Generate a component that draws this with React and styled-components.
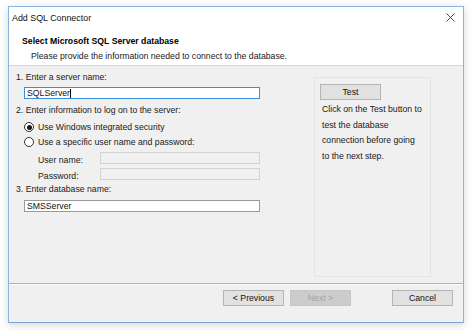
import React from 'react'
import styled, { createGlobalStyle } from 'styled-components'

const GlobalStyle = createGlobalStyle`
  html, body {
    margin: 0;
    padding: 0;
    background: #ffffff;
  }
  body {
    font-family: "Liberation Sans", Arial, sans-serif;
    font-size: 8.7px;
    color: #1a1a1a;
  }
`

const Page = styled.div`
  width: 474px;
  height: 335px;
  padding: 6px 0 0 8px;
  box-sizing: border-box;
`

const Window = styled.div`
  width: 456px;
  height: 317px;
  box-sizing: border-box;
  border: 1px solid #8ab4dd;
  border-bottom-color: #7aa5d2;
  box-shadow: 0 2px 8px rgba(0, 0, 0, 0.16);
  background: #f0f0f0;
  display: flex;
  flex-direction: column;
`

const Header = styled.div`
  background: #ffffff;
  height: 58px;
  border-bottom: 1px solid #d6d6d6;
  display: flex;
  flex-direction: column;
  flex-shrink: 0;
`

const TitleBar = styled.div`
  height: 21px;
  display: flex;
  align-items: center;
  justify-content: space-between;
  padding: 0 8px 0 3px;
  font-size: 8.9px;
  color: #111;
`

const CloseIcon = () => (
  <svg width="9" height="9" viewBox="0 0 9 9">
    <path d="M0.5 0.5 L8.5 8.5 M8.5 0.5 L0.5 8.5" stroke="#333" strokeWidth="0.9" fill="none" />
  </svg>
)

const Heading = styled.div`
  margin-top: 7px;
  padding-left: 13px;
  font-weight: bold;
  line-height: 12px;
  color: #000;
`

const Subtitle = styled.div`
  margin-top: 3px;
  padding-left: 22px;
  line-height: 12px;
  color: #222;
`

const Body = styled.div`
  flex: 1;
  display: flex;
  justify-content: space-between;
  padding: 5px 32px 0 7px;
`

const Form = styled.div`
  width: 251px;
  display: flex;
  flex-direction: column;
`

const Label = styled.div`
  line-height: 12px;
  margin-top: ${p => p.$gap || 0}px;
  color: #1a1a1a;
`

const Field = styled.div`
  box-sizing: border-box;
  height: 12px;
  width: ${p => p.$width}px;
  margin-left: ${p => p.$indent || 0}px;
  margin-top: ${p => p.$gap || 0}px;
  border: 1px solid ${p => (p.$focused ? '#3a8ddb' : p.$disabled ? '#d2d2d2' : '#9a9a9a')};
  background: ${p => (p.$disabled ? '#f0f0f0' : '#ffffff')};
  padding-left: 2px;
  line-height: 10px;
  color: #111;
  display: flex;
  align-items: center;
`

const Caret = styled.span`
  display: inline-block;
  width: 1px;
  height: 9px;
  background: #000;
  margin-left: 0.5px;
`

const RadioRow = styled.div`
  display: flex;
  align-items: center;
  gap: 4px;
  margin-left: 8px;
  margin-top: ${p => p.$gap || 0}px;
  height: 12px;
`

const RadioCircle = styled.span`
  width: 10px;
  height: 10px;
  box-sizing: border-box;
  border-radius: 50%;
  border: 1px solid #333;
  background: #fff;
  display: flex;
  align-items: center;
  justify-content: center;
  &::after {
    content: '';
    width: 5px;
    height: 5px;
    border-radius: 50%;
    background: ${p => (p.$checked ? '#1a1a1a' : 'transparent')};
  }
`

const CredRow = styled.div`
  display: flex;
  align-items: flex-start;
  height: 12px;
  margin-top: ${p => p.$gap || 0}px;
  padding-left: 22px;
`

const CredLabel = styled.span`
  width: 62px;
  height: 12px;
  line-height: 12px;
  margin-top: 2px;
  color: #222;
`

const SidePanel = styled.div`
  width: 117px;
  height: 200px;
  margin-top: 6px;
  box-sizing: border-box;
  border: 1px solid #e4e4e4;
  padding: 6px 0 0 5px;
  display: flex;
  flex-direction: column;
  align-items: flex-start;
`

const Button = styled.div`
  box-sizing: border-box;
  width: 61px;
  height: 16px;
  border: 1px solid ${p => (p.$disabled ? '#c6c6c6' : '#b4b4b4')};
  background: ${p => (p.$disabled ? '#cccccc' : '#e1e1e1')};
  color: ${p => (p.$disabled ? '#a4a4a4' : '#111')};
  display: flex;
  align-items: center;
  justify-content: center;
`

const Help = styled.p`
  margin: 2px 0 0 2px;
  line-height: 15.5px;
  white-space: nowrap;
  color: #1a1a1a;
`

const Footer = styled.div`
  height: 32px;
  flex-shrink: 0;
  border-top: 1px solid #b2b2b2;
  box-shadow: inset 0 1px 0 #fafafa;
  display: flex;
  align-items: flex-start;
  justify-content: flex-end;
  padding: 6px 10px 0 0;
  gap: 6px;
`

const CancelGap = styled.div`
  width: 29px;
`

export default function App() {
  return (
    <>
      <GlobalStyle />
      <Page>
        <Window>
          <Header>
            <TitleBar>
              <span>Add SQL Connector</span>
              <CloseIcon />
            </TitleBar>
            <Heading>Select Microsoft SQL Server database</Heading>
            <Subtitle>Please provide the information needed to connect to the database.</Subtitle>
          </Header>
          <Body>
            <Form>
              <Label>1. Enter a server name:</Label>
              <Field $width={236} $indent={8} $gap={4} $focused>
                SQLServer<Caret />
              </Field>
              <Label $gap={5}>2. Enter information to log on to the server:</Label>
              <RadioRow $gap={5}>
                <RadioCircle $checked />
                <span>Use Windows integrated security</span>
              </RadioRow>
              <RadioRow $gap={3}>
                <RadioCircle />
                <span>Use a specific user name and password:</span>
              </RadioRow>
              <CredRow $gap={4}>
                <CredLabel>User name:</CredLabel>
                <Field $width={160} $disabled />
              </CredRow>
              <CredRow $gap={4}>
                <CredLabel>Password:</CredLabel>
                <Field $width={160} $disabled />
              </CredRow>
              <Label $gap={3}>3. Enter database name:</Label>
              <Field $width={236} $indent={8} $gap={5}>
                SMSServer
              </Field>
            </Form>
            <SidePanel>
              <Button>Test</Button>
              <Help>
                Click on the Test button to<br />
                test the database<br />
                connection before going<br />
                to the next step.
              </Help>
            </SidePanel>
          </Body>
          <Footer>
            <Button>&lt; Previous</Button>
            <Button $disabled>Next &gt;</Button>
            <CancelGap />
            <Button>Cancel</Button>
          </Footer>
        </Window>
      </Page>
    </>
  )
}
